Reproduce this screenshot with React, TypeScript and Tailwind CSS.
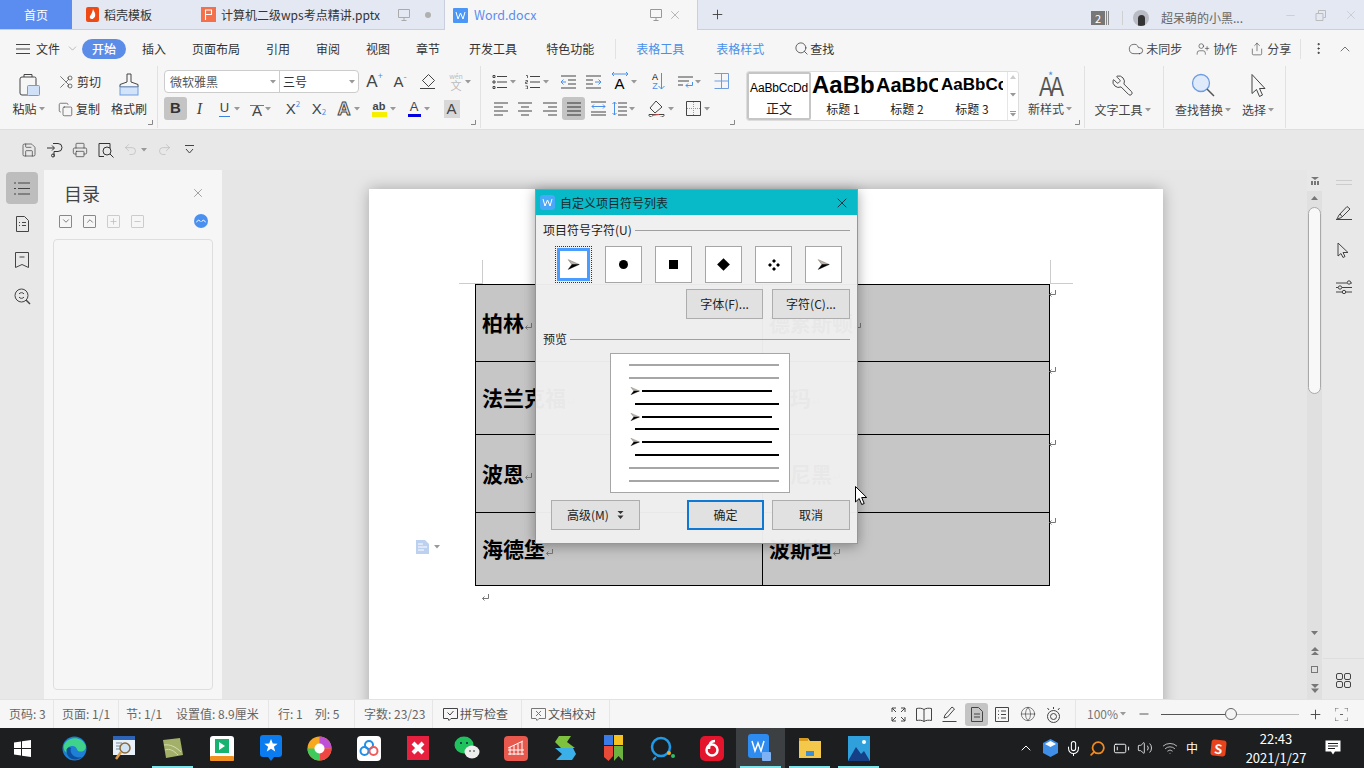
import React from 'react';
import { Plus, X, Minus, Search, ChevronDown, ChevronUp, Wrench, MoreVertical, Printer, Save, Undo2, Redo2, Cloud, UserPlus, Share, Copy, Scissors, Globe, Wifi, Volume2, Mic, BatteryLow } from 'lucide-react';

const G: React.FC<{ w: number; h: number; className?: string; children: React.ReactNode; sw?: number; stroke?: string }> = ({ w, h, className = '', children, sw = 1, stroke = '#444' }) => (
  <svg width={w} height={h} viewBox={`0 0 ${w} ${h}`} fill="none" stroke={stroke} strokeWidth={sw} className={`shrink-0 ${className}`}>
    {children}
  </svg>
);

const Caret = ({ className = '' }: { className?: string }) => (
  <svg width="6" height="4" viewBox="0 0 6 4" className={`shrink-0 ${className}`}><path d="M0 0h6L3 3.5z" fill="#999" /></svg>
);

const Enter = ({ className = '' }: { className?: string }) => (
  <svg width="9" height="9" viewBox="0 0 9 9" fill="none" stroke="#777" className={`shrink-0 ${className}`}>
    <path d="M7.5 1v4.5H1.5M3.5 3.5l-2 2 2 2" />
  </svg>
);

const LetterA = ({ className = '', size = 'text-[17px]' }: { className?: string; size?: string }) => (
  <span className={`[font-family:'Liberation_Sans',sans-serif] leading-none ${size} ${className}`}>A</span>
);

const Arrowhead = ({ s = 16 }: { s?: number }) => (
  <svg width={s} height={s} viewBox="0 0 16 16">
    <path d="M1.500 2L15 8H6z" fill="#b5b5b5" stroke="#8a7a66" strokeWidth="0.700" />
    <path d="M15 8L1.500 14 6 8z" fill="#000" stroke="#000" strokeWidth="0.500" />
  </svg>
);

const tabsBg = 'bg-[#e4e8f2]';

function TabBar() {
  return (
    <div className={`flex h-[30px] shrink-0 ${tabsBg} border-b border-[#c9cfdf] text-[12px] text-[#333]`}>
      <div className="flex w-[72px] items-center justify-center bg-[#5b8df0] text-white">首页</div>
      <div className="ml-px flex w-[115px] items-center bg-[#e4e8f2] pl-[13px]">
        <div className="flex h-[15px] w-[13px] shrink-0 items-center justify-center rounded-[2px] bg-[#ef4a16]">
          <svg width="7" height="11" viewBox="0 0 7 11"><path d="M4 0C5 3 7 4 6 7.500 5 10 2 11 1 9 0 7 3 6 4 0z" fill="#fff" /></svg>
        </div>
        <span className="ml-[5px]">稻壳模板</span>
      </div>
      <div className="ml-[2px] flex w-[253px] items-center bg-[#e4e8f2] pl-[11px]">
        <div className="flex h-[15px] w-[15px] shrink-0 items-center justify-center bg-[#f4704a]">
          <svg width="9" height="11" viewBox="0 0 9 11" fill="none" stroke="#fff" strokeWidth="1.100"><path d="M1.500 11V1H7.500V5.500H1.500" /></svg>
        </div>
        <span className="ml-[5px] whitespace-nowrap text-[12px]">计算机二级wps考点精讲.pptx</span>
        <G w={14} h={14} className="ml-[17px]" stroke="#aaa"><path d="M1.500 1.500h11v8h-11zM7 9.500v3M4.500 12.500h5" /></G>
        <div className="ml-[14px] h-[6px] w-[6px] rounded-full bg-[#b0b0b0]" />
      </div>
      <div className="-mb-px ml-px flex w-[254px] items-center border-x border-[#c9cfdf] bg-[#f6f6f6] pl-[8px]">
        <div className="flex h-[15px] w-[15px] shrink-0 items-center justify-center rounded-[1px] bg-[#4c97f5]">
          <svg width="11" height="9" viewBox="0 0 11 9" fill="none" stroke="#fff"><path d="M1 1l2 7 2.500-6 2.500 6 2-7" /></svg>
        </div>
        <span className="ml-[6px] text-[12.500px] text-[#5b8df0]">Word.docx</span>
        <G w={14} h={14} className="ml-[113px]" stroke="#999"><path d="M1.500 1.500h11v8h-11zM7 9.500v3M4.500 12.500h5" /></G>
        <X size={14} strokeWidth={1} className="ml-[5px] shrink-0 text-[#888]" />
      </div>
      <Plus size={15} strokeWidth={1.500} className="ml-[12px] self-center text-[#444]" />
      <div className="ml-[366px] flex items-center pt-[7px]">
        <div className="flex h-[14px] w-[14px] items-center justify-center bg-[#777] text-[11px] leading-none text-white">2</div>
        <div className="ml-px h-[14px] w-[3px] border-x border-[#888]" />
        <div className="ml-[13px] h-[14px] w-px bg-[#d0d0d0]" />
        <div className="ml-[10px] flex h-[16px] w-[16px] items-end justify-center overflow-hidden rounded-full bg-[#b9bcc4]">
          <div className="h-[11px] w-[7px] rounded-t-full bg-[#333]" />
        </div>
        <span className="ml-[12px] w-[82px] whitespace-nowrap text-[#666]">超呆萌的小黑...</span>
      </div>
      <div className="ml-[41px] flex items-center pt-[1px] text-[#bbb]">
        <Minus size={13} strokeWidth={1} />
        <G w={13} h={13} stroke="#bbb" className="ml-[17px]"><path d="M2 4.500h7v7H2zM4.500 4V1.500h7v7H9.500" /></G>
        <X size={14} strokeWidth={1} className="ml-[17px]" />
      </div>
    </div>
  );
}

function MenuRow() {
  return (
    <div className="flex h-[36px] shrink-0 items-center bg-[#f6f6f6] pl-[16px] pt-[1px] text-[12px] text-[#333]">
      <G w={14} h={10}><path d="M0 .5h14M0 5h14M0 9.500h14" /></G>
      <span className="ml-[6px]">文件</span>
      <ChevronDown size={13} strokeWidth={1} className="ml-[6px] text-[#888]" />
      <span className="ml-[3px] flex h-[20px] w-[44px] items-center justify-center rounded-full bg-[#5b8de8] font-medium text-white">开始</span>
      <span className="ml-[16px]">插入</span>
      <span className="ml-[26px]">页面布局</span>
      <span className="ml-[26px]">引用</span>
      <span className="ml-[26px]">审阅</span>
      <span className="ml-[26px]">视图</span>
      <span className="ml-[26px]">章节</span>
      <span className="ml-[29px]">开发工具</span>
      <span className="ml-[29px]">特色功能</span>
      <div className="ml-[21px] h-[20px] w-px bg-[#e2e2e2]" />
      <span className="ml-[20px] text-[#4a90e8]">表格工具</span>
      <span className="ml-[32px] text-[#4a90e8]">表格样式</span>
      <Search size={15} strokeWidth={1.300} className="ml-[30px] text-[#444]" />
      <span className="ml-px">查找</span>
      <Cloud size={16} strokeWidth={1} className="ml-[294px]" />
      <span className="ml-[2px] text-[#444]">未同步</span>
      <UserPlus size={14} strokeWidth={1} className="ml-[14px]" />
      <span className="ml-[3px] text-[#444]">协作</span>
      <Share size={14} strokeWidth={1} className="ml-[13px]" />
      <span className="ml-[3px] text-[#444]">分享</span>
      <div className="ml-[9px] h-[20px] w-px bg-[#e2e2e2]" />
      <MoreVertical size={15} strokeWidth={1.500} className="ml-[10px]" />
      <ChevronUp size={16} strokeWidth={1} className="ml-[11px]" />
    </div>
  );
}

const Corner = () => (
  <svg width="5" height="5" viewBox="0 0 5 5" className="absolute bottom-[4px] right-[4px]" fill="none" stroke="#888"><path d="M4.500 0v4.500H0" /></svg>
);

const Sep = () => <div className="h-[62px] w-px shrink-0 bg-[#e2e2e2]" />;

function ClipboardGroup() {
  return (
    <div className="relative flex w-[157px] shrink-0 text-[12px] text-[#333]">
      <div className="flex w-[56px] flex-col items-center pt-[7px] pl-[1px]">
        <G w={24} h={24}>
          <path d="M5 4h12.500a1.500 1.500 0 0 1 1.500 1.500V12M5 4A2 2 0 0 0 3 6v14a2 2 0 0 0 2 2h6" />
          <path d="M7 4V1.500h8V4" />
          <rect x="10.500" y="12.500" width="12" height="10" rx="1" fill="#cfe0f7" stroke="#6f9ee0" />
        </G>
        <div className="mt-[3px] flex items-center gap-[2px] text-[12px]">粘贴<Caret /></div>
      </div>
      <div className="flex w-[52px] flex-col pt-[6px] pl-[2px]">
        <div className="flex h-[20px] items-center gap-[3px]"><Scissors size={16} strokeWidth={1} className="-scale-x-100" />剪切</div>
        <div className="mt-[7px] flex h-[20px] items-center gap-[3px]"><Copy size={15} strokeWidth={1} />复制</div>
      </div>
      <div className="flex w-[44px] flex-col items-center pt-[7px] pr-[2px]">
        <G w={24} h={24}>
          <path d="M10 1h4v8l7 2.500V14H3v-2.500L10 9z" />
          <rect x="3" y="14" width="18" height="8" fill="#d3e3f9" stroke="#6f9ee0" />
        </G>
        <div className="mt-[3px] whitespace-nowrap">格式刷</div>
      </div>
      <Corner />
    </div>
  );
}

function FontGroup() {
  return (
    <div className="relative flex w-[322px] shrink-0 flex-col pl-[6px] pt-[4px] text-[#444]">
      <div className="flex h-[23px] items-center">
        <div className="flex h-[23px] w-[195px] rounded-[4px] border border-[#ccc] bg-white text-[12px] text-[#555]">
          <div className="flex w-[115px] items-center justify-between border-r border-[#ccc] pl-[5px] pr-[3px]">微软雅黑<Caret /></div>
          <div className="flex flex-1 items-center justify-between pl-[3px] pr-[3px] text-[#333]">三号<Caret /></div>
        </div>
        <div className="flex w-[27px] justify-center pl-[4px]"><LetterA /><span className="-mt-[2px] text-[9px] leading-none text-[#4a90e8]">+</span></div>
        <div className="flex w-[26px] justify-center pl-[2px]"><LetterA size="text-[15px]" /><span className="-mt-[2px] text-[9px] leading-none text-[#4a90e8]">-</span></div>
        <div className="flex w-[30px] justify-center">
          <G w={17} h={17}><path d="M9.500 1.500l6 6-6 6-6-6zM1 15.500h15" /><path d="M3.500 7.500l6 6" /></G>
        </div>
        <div className="ml-[3px] flex w-[30px] items-center justify-center gap-[2px]">
          <div className="flex flex-col items-center leading-none text-[#bbb]"><span className="text-[7px] leading-[8px]">wén</span><span className="text-[11px] leading-[11px]">文</span></div>
          <Caret />
        </div>
      </div>
      <div className="mt-[4px] flex h-[23px] items-center">
        <div className="flex h-[23px] w-[23px] items-center justify-center rounded-[3px] bg-[#c4c4c4] [font-family:'Liberation_Sans',sans-serif] text-[15px] font-bold text-[#333]">B</div>
        <div className="flex w-[25px] justify-center [font-family:'Liberation_Serif',serif] text-[16px] italic text-[#444]">I</div>
        <div className="flex w-[34px] items-center justify-center gap-[4px] pl-[1px]"><div className="flex h-[16px] flex-col items-center border-b border-[#3b82e0] px-[1px] [font-family:'Liberation_Sans',sans-serif] text-[13px] font-light leading-[14px]">U</div><Caret /></div>
        <div className="flex w-[34px] items-center justify-center gap-[3px] pr-[3px]">
          <div className="relative"><LetterA size="text-[15px]" /><div className="absolute left-[-2px] right-[-2px] top-[8px] h-px bg-[#d05050]" /></div><Caret />
        </div>
        <div className="flex w-[26px] justify-center"><span className="[font-family:'Liberation_Sans',sans-serif] text-[15px] leading-none">X</span><span className="-mt-[1px] text-[8px] leading-none text-[#4a90e8]">2</span></div>
        <div className="flex w-[26px] items-end justify-center"><span className="[font-family:'Liberation_Sans',sans-serif] text-[15px] leading-none">X</span><span className="text-[8px] leading-none text-[#4a90e8]">2</span></div>
        <div className="flex w-[33px] items-center justify-center gap-[3px]"><LetterA size="text-[18px] font-bold text-[#eee] [-webkit-text-stroke:1px_#444]" /><Caret /></div>
        <div className="flex w-[37px] items-center justify-center gap-[3px]">
          <div className="flex flex-col items-center"><span className="[font-family:'Liberation_Sans',sans-serif] text-[11px] font-bold leading-[11px]">ab</span><div className="h-[5px] w-[15px] bg-[#f6f000]" /></div><Caret />
        </div>
        <div className="flex w-[33px] items-center justify-center gap-[3px]">
          <div className="flex flex-col items-center"><LetterA size="text-[13px]" /><div className="mt-px h-[3px] w-[13px] bg-[#0000e0]" /></div><Caret />
        </div>
        <div className="flex w-[33px] justify-center"><div className="flex h-[18px] w-[16px] items-center justify-center bg-[#d8d8d8]"><LetterA size="text-[15px]" /></div></div>
      </div>
      <Corner />
    </div>
  );
}

const ListIcon = ({ num = false }: { num?: boolean }) => (
  <G w={15} h={14}>
    <path d="M5 1.500h10M5 7h10M5 12.500h10" />
    {num ? <path d="M1 .5h1.500V3M.5 5.500h2v1.500h-2V8.500h2M.5 11h2v3h-2" strokeWidth="0.8" /> : <path d="M1 .5h2v2H1zM1 6h2v2H1zM1 11.500h2v2H1z" />}
  </G>
);

const Align = ({ kind }: { kind: 'l' | 'c' | 'r' | 'j' }) => {
  const p = { l: 'M1 2h14M1 6h9M1 10h14M1 14h9', c: 'M1 2h14M4 6h8M1 10h14M4 14h8', r: 'M1 2h14M6 6h9M1 10h14M6 14h9', j: 'M1 2h14M1 6h14M1 10h14M1 14h14' }[kind];
  return <G w={16} h={16} stroke={kind === 'j' ? '#333' : '#444'}><path d={p} /></G>;
};

function ParaGroup() {
  return (
    <div className="relative flex w-[258px] shrink-0 flex-col pl-[8px] pt-[4px]">
      <div className="flex h-[23px] items-center">
        <div className="flex w-[32px] items-center gap-[3px] pl-[3px]"><ListIcon /><Caret /></div>
        <div className="flex w-[35px] items-center gap-[3px] pl-[4px]"><ListIcon num /><Caret /></div>
        <div className="flex w-[25px] justify-center"><G w={15} h={14}><path d="M0 1h15M0 13h15M7 5h8M7 9h8" /><path d="M5 7H0M2.500 4.500L0 7l2.500 2.500" stroke="#4a90e8" /></G></div>
        <div className="flex w-[25px] justify-center"><G w={15} h={14}><path d="M0 1h15M0 13h15M0 5h7M0 9h7" /><path d="M9 7h6M12.500 4.500L15 7l-2.500 2.500" stroke="#4a90e8" /></G></div>
        <div className="flex w-[36px] items-center justify-center gap-[3px]">
          <div className="flex flex-col items-center"><G w={16} h={4} stroke="#4a90e8"><path d="M0 2h16M2 0L0 2l2 2M14 0l2 2-2 2" /></G><LetterA size="text-[15px]" /></div><Caret />
        </div>
        <div className="flex w-[31px] justify-center pl-[2px]">
          <div className="flex items-center"><div className="flex flex-col items-center [font-family:'Liberation_Sans',sans-serif] text-[9px] leading-[9px]"><span>A</span><span className="text-[#4a90e8]">Z</span></div><G w={7} h={17} stroke="#4a90e8"><path d="M3.500 0v16M.5 13l3 3 3-3" /></G></div>
        </div>
        <div className="flex w-[32px] items-center justify-center gap-[2px]">
          <G w={15} h={14}><path d="M0 2h15M0 6h11M0 10h5" /><path d="M8 10.500h6.500V7M8 10.500l2-2M8 10.500l2 2" stroke="#4a90e8" /></G><Caret />
        </div>
        <div className="flex w-[32px] justify-center"><G w={15} h={17} stroke="#6f9ee0"><path d="M.5.5h14v15H.5M.5.5M7.500.5v15M7.500 8h7" /><path d="M.5 8h7" stroke="#6f9ee0" /></G></div>
      </div>
      <div className="mt-[4px] flex h-[23px] items-center">
        <div className="flex w-[23px] justify-center"><Align kind="l" /></div>
        <div className="flex w-[25px] justify-center"><Align kind="c" /></div>
        <div className="flex w-[25px] justify-center"><Align kind="r" /></div>
        <div className="flex h-[23px] w-[23px] items-center justify-center rounded-[3px] bg-[#c4c4c4]"><Align kind="j" /></div>
        <div className="flex w-[26px] justify-center"><G w={15} h={15}><path d="M0 1h15M0 14h15M0 11h15" /><path d="M1 5.500h13M3 3.500l-2 2 2 2M12 3.500l2 2-2 2" stroke="#4a90e8" /></G></div>
        <div className="flex w-[23px] items-center justify-center gap-[2px] pl-[2px]"><G w={15} h={15}><path d="M6 2h9M6 6h9M6 10h9M6 14h9" /><path d="M2.500 1v13M.5 3l2-2 2 2M.5 12l2 2 2-2" stroke="#4a90e8" /></G><Caret /></div>
        <div className="ml-[8px] flex w-[35px] items-center justify-center gap-[3px] pl-[3px]">
          <G w={17} h={17}><path d="M8 1L2 8l5 5 7-6zM1 15.500a7 2 0 0 0 15 0v-1H1z" /><path d="M4 15.500l7-1" stroke="#e05050" /></G><Caret />
        </div>
        <div className="flex w-[38px] items-center justify-center gap-[3px] pl-[4px]"><G w={15} h={15}><path d="M.5.5h14v14H.5z" /><path d="M7.500 1v13M1 7.500h13" stroke="#999" strokeDasharray="1 1" /></G><Caret /></div>
      </div>
      <Corner />
    </div>
  );
}

const StyleSample = ({ cls, width, text, label, labelCls = 'mt-[2px] text-[12px]' }: { cls: string; width: string; text: string; label: string; labelCls?: string }) => (
  <div className={`flex flex-col items-center overflow-hidden ${width}`}>
    <div className={`flex h-[28px] w-full items-center justify-center overflow-hidden whitespace-nowrap [font-family:'Liberation_Sans',sans-serif] text-black ${cls}`}>
      <span className="block">{text}</span>
    </div>
    <span className={`leading-[16px] text-[#222] ${labelCls}`}>{label}</span>
  </div>
);

function StylesGroup() {
  return (
    <div className="relative flex w-[345px] shrink-0 pl-[7px] pt-[5px]">
      <div className="flex h-[50px] w-[273px] rounded-[3px] border border-[#ddd] bg-white">
        <div className="rounded-[2px] border-2 border-[#c6c6c6]">
          <StyleSample cls="text-[12px] tracking-[-0.2px]" width="w-[60px]" text="AaBbCcDd" label="正文" labelCls="-mt-[2px] text-[13px]" />
        </div>
        <div className="-mt-px flex">
          <div className="flex w-[65px] overflow-hidden pl-[1px]"><StyleSample cls="!justify-start text-[24px] font-bold" width="w-[62px]" text="AaBb" label="标题 1" /></div>
          <div className="flex w-[65px] overflow-hidden"><StyleSample cls="!justify-start text-[20px] font-bold" width="w-[62px]" text="AaBbC" label="标题 2" /></div>
          <div className="flex w-[64px] overflow-hidden"><StyleSample cls="!justify-start text-[17px] font-bold" width="w-[62px]" text="AaBbCc" label="标题 3" /></div>
        </div>
        <div className="ml-auto flex w-[11px] flex-col items-center justify-between border-l border-[#e6e6e6] py-[3px]">
          <svg width="6" height="4" viewBox="0 0 6 4"><path d="M0 4h6L3 0z" fill="#ccc" /></svg>
          <Caret />
          <div className="flex flex-col items-center gap-px"><div className="h-px w-[6px] bg-[#999]" /><Caret /></div>
        </div>
      </div>
      <div className="ml-[1px] flex w-[60px] flex-col items-center">
        <div className="flex h-[27px] flex-col items-center leading-none">
          <span className="h-[9px] pl-[1px] text-[11px] leading-[9px] text-[#4a90e8]">*</span>
          <span className="origin-bottom scale-y-[1.3] [font-family:'Liberation_Sans',sans-serif] text-[21px] leading-[19px] tracking-[-3px] text-[#555]">AA</span>
        </div>
        <div className="mt-[2px] flex items-center gap-[2px] whitespace-nowrap text-[12px] text-[#444]">新样式<Caret /></div>
      </div>
      <Corner />
    </div>
  );
}

function ToolButton({ icon, label, cls }: { icon: React.ReactNode; label: string; cls: string }) {
  return (
    <div className={`flex flex-col items-center pt-[5px] ${cls}`}>
      <div className="flex h-[28px] items-center">{icon}</div>
      <div className="mt-[2px] flex items-center gap-[2px] whitespace-nowrap text-[12px] text-[#444]">{label}<Caret /></div>
    </div>
  );
}

function Ribbon() {
  return (
    <div className="flex h-[64px] shrink-0 border-b border-[#dedede] bg-[#f6f6f6]">
      <ClipboardGroup />
      <Sep />
      <FontGroup />
      <Sep />
      <ParaGroup />
      <StylesGroup />
      <Sep />
      <ToolButton cls="w-[78px] pr-[3px]" label="文字工具" icon={<Wrench size={23} strokeWidth={1} className="-scale-x-100 text-[#444]" />} />
      <Sep />
      <div className="flex w-[121px] shrink-0">
        <ToolButton cls="w-[78px]" label="查找替换" icon={
          <G w={25} h={25} stroke="#555"><circle cx="10" cy="10" r="8.500" fill="#dfeafa" stroke="#6f9ee0" strokeWidth="1.300" /><path d="M16 16l7 7" strokeWidth="1.500" /></G>
        } />
        <ToolButton cls="w-[32px]" label="选择" icon={
          <G w={18} h={25} stroke="#444"><path d="M3 1.500v19l4.500-4 3 7 3-1.500-3-6.500H16z" /></G>
        } />
      </div>
      <Sep />
    </div>
  );
}

function QuickBar() {
  return (
    <div className="flex h-[40px] shrink-0 items-center bg-[#e8e8e8] pb-[1px] pl-[21px]">
      <Save size={16} strokeWidth={1} className="text-[#333]" />
      <G w={16} h={16} className="ml-[10px]" stroke="#333"><path d="M0 6h7M5 3.500L7.500 6 5 8.500M6 1.500h5a4 4 0 0 1 0 8H7v5" /><circle cx="6" cy="13.500" r="1.500" /></G>
      <Printer size={16} strokeWidth={1} className="ml-[9px] text-[#333]" />
      <G w={16} h={16} className="ml-[10px]" stroke="#333"><path d="M6 14.500H1v-13h11V6" /><circle cx="9" cy="9" r="4" /><path d="M12 12l3.500 3.500" /></G>
      <Undo2 size={15} strokeWidth={1} className="ml-[9px] text-[#b5b5b5]" />
      <Caret className="ml-[3px]" />
      <Redo2 size={15} strokeWidth={1} className="ml-[10px] text-[#b5b5b5]" />
      <G w={11} h={9} className="ml-[12px]"><path d="M1 .5h9M2 4l3.500 4L9 4" /></G>
    </div>
  );
}

function LeftStrip() {
  return (
    <div className="flex w-[44px] shrink-0 flex-col items-center bg-[#e8e8e8] pt-[2px]">
      <div className="flex h-[32px] w-[32px] items-center justify-center rounded-[4px] bg-[#bdbdbd]">
        <G w={16} h={13} stroke="#444"><path d="M4 1h12M4 6.500h12M4 12h12M0 1h2M0 6.500h2M0 12h2" /></G>
      </div>
      <div className="mt-[12px]"><G w={14} h={16}><path d="M1.500 .5h8l4 4v11h-12z" /><path d="M4 6.500h1M7 6.500h4M4 9.500h1M7 9.500h4" /></G></div>
      <div className="mt-[20px]"><G w={14} h={16}><path d="M.5.5h13v15L7 12.500.5 15.500z" /><path d="M4.500 5h5" /></G></div>
      <div className="mt-[20px]"><G w={17} h={17}><circle cx="7.500" cy="7.500" r="6.500" /><path d="M12 12l4 4" strokeWidth="1.500" /><path d="M5 6a3 3 0 0 1 5 0M10 9a3 3 0 0 1-5 0" /></G></div>
    </div>
  );
}

const TocBtn = ({ children, muted }: { children: React.ReactNode; muted?: boolean }) => (
  <div className={`flex h-[13px] w-[13px] items-center justify-center rounded-[1px] border ${muted ? 'border-[#ccc] text-[#bbb]' : 'border-[#888] text-[#666]'}`}>{children}</div>
);

function TocPanel() {
  return (
    <div className="flex w-[178px] shrink-0 flex-col bg-[#f6f6f6] pb-[9px] pl-[9px] pr-[9px]">
      <div className="mt-[12px] flex h-[22px] items-center pl-[11px] text-[18px] leading-none text-[#444]">
        目录
        <X size={14} strokeWidth={1} className="ml-[91px] text-[#666]" />
      </div>
      <div className="mt-[10px] flex items-center pl-[6px]">
        <TocBtn><ChevronDown size={10} /></TocBtn>
        <div className="ml-[11px]"><TocBtn><ChevronUp size={10} /></TocBtn></div>
        <div className="ml-[11px]"><TocBtn muted><Plus size={9} /></TocBtn></div>
        <div className="ml-[11px]"><TocBtn muted><Minus size={9} /></TocBtn></div>
        <div className="ml-[50px] flex h-[14px] w-[14px] items-center justify-center rounded-full bg-[#4a90f0]">
          <G w={10} h={4} stroke="#fff"><path d="M0 3.500l2.500-2.500 2 1.500M5.500 2.500l2-1.500L10 3.500" /></G>
        </div>
      </div>
      <div className="mt-[11px] flex-1 rounded-[4px] border border-[#dedede] bg-[#f6f6f6]" />
    </div>
  );
}

const cells = [
  ['柏林', '德累斯顿', 'h-[77px]'],
  ['法兰克福', '科玛', 'h-[73px]'],
  ['波恩', '慕尼黑', 'h-[78px]'],
  ['海德堡', '波斯坦', 'h-[73px]'],
];

function DocPage() {
  return (
    <div className="relative ml-[147px] mt-[19px] h-[600px] w-[794px] bg-white pl-[106px] pt-[95px] shadow-[0_0_14px_rgba(0,0,0,0.28)]">
      <div className="absolute left-[113px] top-[71px] h-[24px] w-px bg-[#ccc]" />
      <div className="absolute left-[90px] top-[94px] h-px w-[23px] bg-[#ccc]" />
      <div className="absolute left-[681px] top-[71px] h-[24px] w-px bg-[#ccc]" />
      <div className="absolute left-[681px] top-[94px] h-px w-[23px] bg-[#ccc]" />
      <div className="w-[575px] border-t border-l border-black bg-[#c6c6c6]">
        {cells.map(([a, b, h]) => (
          <div key={a} className={`relative flex ${h}`}>
            <div className="flex w-[287px] items-center border-r border-b border-black pb-[1px] pl-[6px] text-[21px] font-bold leading-none text-black">
              {a}<Enter className="mt-[7px]" />
            </div>
            <div className="flex w-[287px] items-center border-r border-b border-black pb-[1px] pl-[6px] text-[21px] font-bold leading-none text-black">
              {b}<Enter className="mt-[7px]" />
            </div>
            <Enter className="absolute left-[572px] top-[4px]" />
          </div>
        ))}
      </div>
      <Enter className="ml-[6px] mt-[7px]" />
      <div className="absolute left-[47px] top-[351px] flex items-center gap-[5px]">
        <G w={13} h={14} stroke="#fff"><path d="M0 0h9l4 4v10H0z" fill="#bcd0f0" stroke="none" /><path d="M2 4h5M2 7h9M2 10h6" /></G>
        <Caret />
      </div>
    </div>
  );
}

function ScrollBar() {
  const ar = 'fill-[#777]';
  return (
    <div className="flex w-[57px] shrink-0 bg-[#e8e8e8]">
      <div className="flex w-[15px] flex-col items-center bg-[#e0e0e0]">
        <div className="flex h-[21px] w-full items-center justify-center bg-[#e8e8e8]">
          <svg width="8" height="8" viewBox="0 0 8 8"><path d="M0 0h8L4 3z" className={ar} /><path d="M0 4h2v4H0zM3 4h2v4H3zM6 4h2v4H6z" className={ar} /></svg>
        </div>
        <svg width="7" height="4" viewBox="0 0 7 4" className="mt-[5px]"><path d="M0 4h7L3.500 0z" className={ar} /></svg>
        <div className="mt-[7px] h-[187px] w-[13px] rounded-[7px] border border-[#a9a9a9] bg-[#f8f8f8]" />
        <svg width="7" height="4" viewBox="0 0 7 4" className="mt-[237px]"><path d="M0 0h7L3.500 4z" className={ar} /></svg>
        <svg width="8" height="9" viewBox="0 0 8 9" className="mt-[12px]"><path d="M0 4h8L4 0zM0 8h8L4 4.500z" className={ar} /></svg>
        <div className="mt-[10px] h-[7px] w-[7px] border border-[#777]" />
        <svg width="8" height="9" viewBox="0 0 8 9" className="mt-[11px]"><path d="M0 0h8L4 4zM0 4.500h8L4 9z" className={ar} /></svg>
      </div>
      <div className="flex flex-1 flex-col items-center pl-[1px]">
        <div className="mt-[10px] flex w-[16px] flex-col gap-[3px]"><div className="h-px bg-[#ccc]" /><div className="h-px bg-[#ccc]" /></div>
        <G w={17} h={15} className="mt-[20px]"><path d="M1 14.500h16M2 14l2-4 8-8.500 3 2.500-8.500 8.500-4 1.500M5 9l2.500 3" /></G>
        <G w={13} h={17} className="mt-[22px]"><path d="M1 1v13l3-2.500 2 4 2-1-2-4h5z" /></G>
        <G w={16} h={14} className="mt-[21px]"><path d="M0 3h11M14.500 3H16M0 7.500h2M6 7.500h10M0 12h6M9.500 12H16" /><circle cx="13" cy="2.500" r="1.700" /><circle cx="4" cy="7.500" r="1.700" /><circle cx="8" cy="12" r="1.700" /></G>
        <div className="mt-auto w-full border-t border-[#dedede] pb-[11px] pt-[14px]">
          <div className="flex justify-center"><G w={15} h={15}><rect x=".5" y=".5" width="6" height="6" rx="1.500" /><rect x="8.500" y=".5" width="6" height="6" rx="1.500" /><rect x=".5" y="8.500" width="6" height="6" rx="1.500" /><rect x="8.500" y="8.500" width="6" height="6" rx="1.500" /></G></div>
        </div>
      </div>
    </div>
  );
}

const StatusCell = ({ children, cls }: { children: React.ReactNode; cls: string }) => (
  <div className={`flex h-full items-center border-r border-[#e6e6e6] whitespace-nowrap ${cls}`}>{children}</div>
);

function StatusBar() {
  return (
    <div className="flex h-[29px] shrink-0 items-center border-t border-[#e2e2e2] bg-[#f6f6f6] text-[12px] text-[#666]">
      <StatusCell cls="w-[54px] pl-[9px]">页码: 3</StatusCell>
      <StatusCell cls="w-[65px] pl-[8px]">页面: 1/1</StatusCell>
      <StatusCell cls="w-[150px] pl-[7px]">节: 1/1<span className="ml-[14px]">设置值: 8.9厘米</span></StatusCell>
      <StatusCell cls="w-[86px] pl-[9px]">行: 1<span className="ml-[12px]">列: 5</span></StatusCell>
      <StatusCell cls="w-[78px] pl-[9px]">字数: 23/23</StatusCell>
      <StatusCell cls="w-[89px] pl-[10px]">
        <G w={15} h={13}><path d="M.5.5h14v10H8L6 12.500 5 10.500H.5z" /><path d="M4.500 4.500l2.500 2.500 3.500-4" /></G>
        <span className="ml-[2px] text-[#555]">拼写检查</span>
      </StatusCell>
      <StatusCell cls="w-[88px] pl-[9px]">
        <G w={15} h={13} stroke="#777"><path d="M.5.5h14v10H8L6 12.500 5 10.500H.5z" /><path d="M5 3l5 5M10 3L5 8" /></G>
        <span className="ml-[2px] text-[#555]">文档校对</span>
      </StatusCell>
      <div className="ml-[281px] flex items-center">
        <G w={15} h={15}><path d="M1 5V1h4M10 1h4v4M14 10v4h-4M5 14H1v-4M1 1l4 4M14 1l-4 4M14 14l-4-4M1 14l4-4" /></G>
        <G w={16} h={15} className="ml-[10px]"><path d="M8 2.500C6 1 3 1 .5 1.500v12C3 13 6 13 8 14.500 10 13 13 13 15.500 13.500v-12C13 1 10 1 8 2.500zM8 2.500v12" /></G>
        <G w={15} h={16} className="ml-[10px]"><path d="M.5 15.500h14M2 12l1-3 7-8 2.500 2-7 8z" /></G>
        <div className="ml-[8px] flex h-[23px] w-[23px] items-center justify-center rounded-[3px] bg-[#c4c4c4]">
          <G w={12} h={15}><path d="M.5.5h7l4 4v10H.5zM3 7h6M3 10h6" /></G>
        </div>
        <G w={14} h={15} className="ml-[7px]"><path d="M.5.5h13v14H.5zM3 4h1M6 4h5M3 7.500h1M6 7.500h5M3 11h1M6 11h5" /></G>
        <Globe size={16} strokeWidth={1} className="ml-[11px] text-[#444]" />
        <G w={17} h={17} className="ml-[9px]"><circle cx="8.500" cy="10.500" r="6" /><circle cx="8.500" cy="10.500" r="3" /><path d="M4 4L2.500 2M8.500 3V1M13 4l1.500-2" /></G>
      </div>
      <div className="ml-[13px] h-full w-px bg-[#e6e6e6]" />
      <span className="ml-[11px] text-[#777]">100%</span>
      <Caret className="ml-[2px]" />
      <Minus size={14} strokeWidth={1.500} className="ml-[11px] text-[#444]" />
      <div className="ml-[10px] flex h-[12px] w-[138px] items-center">
        <div className="h-px w-[64px] bg-[#555]" />
        <div className="h-[12px] w-[12px] rounded-full border border-[#666] bg-[#f4f4f4]" />
        <div className="h-px flex-1 bg-[#bbb]" />
      </div>
      <Plus size={15} strokeWidth={1.500} className="ml-[9px] text-[#444]" />
      <G w={13} h={13} className="ml-[12px]" stroke="#666"><path d="M0 3.500V0h3.500M9.500 0H13v3.500M13 9.500V13H9.500M3.500 13H0V9.500M5 6.500h3" /></G>
    </div>
  );
}

const Tk = ({ children, active, open }: { children: React.ReactNode; active?: boolean; open?: boolean }) => (
  <div className={`relative flex h-[40px] w-[49px] shrink-0 items-center justify-center ${active ? 'bg-[#3c4043]' : ''}`}>
    {children}
    {open && <div className="absolute bottom-0 left-[4px] right-[4px] h-[2px] bg-[#7fe3ea]" />}
  </div>
);

function Taskbar() {
  return (
    <div className="flex h-[40px] shrink-0 items-center bg-[#1c1e20] text-white">
      <div className="flex w-[50px] justify-center pr-[6px]">
        <svg width="17" height="17" viewBox="0 0 17 17"><path d="M0 2.500l7-1v6.500H0zM8 1.300L17 0v8H8zM0 9h7v6.500l-7-1zM8 9h9v8l-9-1.300z" fill="#fff" /></svg>
      </div>
      <Tk><svg width="25" height="25" viewBox="0 0 25 25"><circle cx="12.500" cy="12.500" r="12" fill="#1f7fd6" /><path d="M2 9C5 1 19-1 23.500 9c1.500 5-3 7-6 6.500-3-.5-2-4-5-5C8 9 4 12 5 17 2 15 1 12 2 9z" fill="#3fd28a" /><path d="M9 12c-2 6 4 11 11 9-6 5-16 2-15.500-7 0-2 3-4 4.500-2z" fill="#0d4f9f" /></svg></Tk>
      <Tk><svg width="24" height="26" viewBox="0 0 24 26"><rect x="1" y="1" width="22" height="19" fill="#e8f0fa" /><rect x="1" y="1" width="22" height="4" fill="#2e64b8" /><path d="M4 8h6M4 11h5M4 14h5" stroke="#789" /><circle cx="13" cy="13" r="5" fill="#cfe4f7" stroke="#8a6a3a" strokeWidth="1.500" /><path d="M9 17l-5 7" stroke="#d79a4a" strokeWidth="2.500" /></svg></Tk>
      <Tk open><svg width="22" height="22" viewBox="0 0 22 22"><path d="M1 3l17-2 3 17-17 3z" fill="#a3b06a" /><path d="M2 8c6-1 12 2 17 7M3 13c5-2 9 1 13 5" stroke="#d5dcae" fill="none" /></svg></Tk>
      <Tk><svg width="24" height="25" viewBox="0 0 24 25"><rect width="24" height="25" rx="3" fill="#fff" /><path d="M5 3h14v14H5z" fill="#15b36f" /><path d="M9 6v8l6-4z" fill="#fff" /><rect y="20" width="24" height="5" rx="1" fill="#f09020" /></svg></Tk>
      <Tk><svg width="22" height="26" viewBox="0 0 22 26"><path d="M3 0h16a3 3 0 0 1 3 3v16a3 3 0 0 1-3 3h-5l-3 4-3-4H3a3 3 0 0 1-3-3V3a3 3 0 0 1 3-3z" fill="#0b7bf0" /><path d="M11 4l1.800 4.500 4.800.2-3.700 3 1.300 4.700-4.200-2.700-4.200 2.700 1.300-4.700-3.700-3 4.800-.2z" fill="#fff" /></svg></Tk>
      <Tk><svg width="25" height="25" viewBox="0 0 25 25"><circle cx="12.500" cy="12.500" r="12" fill="#f7a81f" /><path d="M12.500 .5a12 12 0 0 1 12 12H12.500z" fill="#c04fd8" /><path d="M24.500 12.500a12 12 0 0 1-12 12v-12z" fill="#ef4545" /><path d="M12.500 24.500a12 12 0 0 1-12-12h12z" fill="#3ecb5c" /><circle cx="12.500" cy="12.500" r="5" fill="#fff" /></svg></Tk>
      <Tk><svg width="24" height="25" viewBox="0 0 24 25"><rect width="24" height="25" rx="4" fill="#fff" /><circle cx="12" cy="9" r="4" fill="none" stroke="#1f8fe8" strokeWidth="2" /><circle cx="7.500" cy="15" r="4" fill="none" stroke="#1f8fe8" strokeWidth="2" /><circle cx="16.500" cy="15" r="4" fill="none" stroke="#ef5b5b" strokeWidth="2" /></svg></Tk>
      <Tk><svg width="22" height="24" viewBox="0 0 22 24"><rect width="22" height="24" fill="#e8203f" /><path d="M6 7l10 10M16 7L6 17" stroke="#fff" strokeWidth="4" /></svg></Tk>
      <Tk><svg width="26" height="24" viewBox="0 0 26 24"><ellipse cx="10" cy="9" rx="9.500" ry="8.500" fill="#1fc25c" /><ellipse cx="18" cy="16" rx="7.500" ry="6.500" fill="#eee" /><circle cx="7" cy="7" r="1" fill="#124" /><circle cx="13" cy="7" r="1" fill="#124" /><circle cx="16" cy="15" r="1" fill="#777" /><circle cx="20" cy="15" r="1" fill="#777" /></svg></Tk>
      <Tk><svg width="24" height="25" viewBox="0 0 24 25"><rect width="24" height="25" rx="4" fill="#e8584d" /><path d="M4 12l15-7M6 11v8M10 9v10M14 8v11M18 6v13M4 14h16M4 18h16" stroke="#fff" /></svg></Tk>
      <Tk><svg width="24" height="25" viewBox="0 0 24 25"><path d="M6 0h12l-4 6 8 6H8L2 6z" fill="#7ec13f" /><path d="M2 12h18l3 6-4 6H3l6-6z" fill="#3bb0e8" /></svg></Tk>
      <Tk><svg width="20" height="26" viewBox="0 0 20 26"><rect x="0" y="0" width="9" height="10" fill="#3b7be8" /><rect x="10" y="0" width="9" height="10" fill="#f6c21f" /><path d="M0 11h9v10l-4.500 5L0 22z" fill="#e84a3a" /><path d="M10 11h9v15l-4.500-5-4.500 5z" fill="#6db33f" /></svg></Tk>
      <Tk><svg width="26" height="25" viewBox="0 0 26 25" fill="none"><circle cx="11" cy="11" r="9" stroke="#1f9be8" strokeWidth="2.500" /><path d="M6 21l-3 3" stroke="#1f9be8" strokeWidth="2" /><circle cx="19" cy="17" r="2" fill="#f6a81f" /><circle cx="23" cy="20" r="2" fill="#2fc06a" /></svg></Tk>
      <Tk><svg width="24" height="25" viewBox="0 0 24 25"><rect width="24" height="25" rx="5" fill="#e3142c" /><circle cx="12" cy="14" r="5.500" fill="none" stroke="#fff" strokeWidth="2.500" /><path d="M9 13c0-6 2-8 6-8" fill="none" stroke="#fff" strokeWidth="2.500" /></svg></Tk>
      <Tk active open><svg width="25" height="28" viewBox="0 0 25 28"><rect width="21" height="24" rx="3" fill="#2e8bf0" /><path d="M4 7l3 10 3-8 3 8 3-10" fill="none" stroke="#fff" strokeWidth="1.500" /><rect x="14" y="18" width="9" height="9" rx="1" fill="#7fb2f5" /></svg></Tk>
      <Tk open><svg width="22" height="22" viewBox="0 0 22 22"><path d="M0 1h9l2 3h11v17H0z" fill="#f4c84a" /><rect x="0" y="1" width="9" height="3" fill="#d99a20" /><rect x="7" y="14" width="8" height="5" fill="#3b8fd8" /></svg></Tk>
      <Tk open><svg width="22" height="25" viewBox="0 0 22 25"><rect width="22" height="25" fill="#2fa0dc" /><path d="M0 25l8-14 5 7 3-3 6 10z" fill="#153f87" /><circle cx="16" cy="6" r="2" fill="#fff" /></svg></Tk>
      <div className="ml-[135px] flex items-center">
        <ChevronUp size={16} strokeWidth={1.500} />
        <svg width="15" height="18" viewBox="0 0 15 18" className="ml-[9px]"><path d="M7.500 0L15 4v10l-7.500 4L0 14V4z" fill="#3f8fe8" /><path d="M7.500 2L13 5l-5.500 3L2 5z" fill="#fff" /></svg>
        <Mic size={17} strokeWidth={1.500} className="ml-[7px]" />
        <Search size={17} strokeWidth={2.500} className="ml-[7px] -scale-x-100 text-[#f08a1f]" />
        <BatteryLow size={17} strokeWidth={1.300} className="ml-[7px]" />
        <Volume2 size={16} strokeWidth={1.200} className="ml-[7px]" />
        <Wifi size={16} strokeWidth={1.200} className="ml-[9px] text-[#ddd]" />
        <span className="ml-[8px] text-[12px] leading-none">中</span>
        <div className="ml-[13px] flex h-[16px] w-[15px] rotate-[6deg] items-center justify-center rounded-[3px] bg-[#e9431c] text-[13px] font-bold leading-none">S</div>
      </div>
      <div className="ml-[17px] flex w-[66px] flex-col items-center text-[13px] leading-[19px]">
        <span>22:43</span>
        <span className="whitespace-nowrap">2021/1/27</span>
      </div>
      <div className="ml-[16px]">
        <svg width="16" height="17" viewBox="0 0 16 17" fill="none"><path d="M.5.5h15v11H10l-2 3-2-3H.5z" fill="#fff" /><path d="M3 3.500h10M3 6h10M3 8.500h7" stroke="#1c1e20" /></svg>
      </div>
    </div>
  );
}

const BulletBtn = ({ children, selected }: { children: React.ReactNode; selected?: boolean }) => (
  selected ? (
    <div className="border border-dotted border-[#333] p-[1px]">
      <div className="flex h-[33px] w-[33px] items-center justify-center border-[3px] border-[#4a9dff] bg-white">{children}</div>
    </div>
  ) : (
    <div className="flex h-[37px] w-[37px] items-center justify-center border border-[#a6a6a6] bg-white">{children}</div>
  )
);

const DlgBtn = ({ children, w, primary, className = '' }: { children: React.ReactNode; w: string; primary?: boolean; className?: string }) => (
  <div className={`flex h-[30px] items-center justify-center bg-[#e1e1e1] text-[12px] text-[#222] ${primary ? 'border-2 border-[#0f78d4]' : 'border border-[#adadad]'} ${w} ${className}`}>{children}</div>
);

const Legend = ({ children }: { children: React.ReactNode }) => (
  <div className="flex h-[16px] items-center text-[12px] text-[#222]">
    {children}
    <div className="ml-[3px] h-px flex-1 bg-[#a0a0a0]" />
  </div>
);

const PreviewLine = ({ cls }: { cls: string }) => <div className={`h-[2px] ${cls}`} />;

function Preview() {
  const gray = 'ml-[18px] w-[150px] bg-[#a6a6a6]';
  return (
    <div className="ml-[67px] mt-[6px] flex h-[140px] w-[180px] flex-col justify-between border border-[#a6a6a6] bg-white py-[10px]">
      <PreviewLine cls={gray} />
      <PreviewLine cls={gray} />
      {[0, 1, 2].map((i) => (
        <React.Fragment key={i}>
          <div className="relative ml-[31px] h-[2px] w-[130px] bg-black">
            <div className="absolute -left-[12px] -top-[4px]"><Arrowhead s={10} /></div>
          </div>
          <PreviewLine cls="ml-[24px] w-[144px] bg-black" />
        </React.Fragment>
      ))}
      <PreviewLine cls={gray} />
      <PreviewLine cls={gray} />
    </div>
  );
}

function Dialog() {
  return (
    <div className="absolute left-[535px] top-[189px] flex h-[355px] w-[323px] flex-col border border-[#3fb9c6] bg-[#f0f0f0]/[0.97] shadow-[0_2px_12px_rgba(0,0,0,0.35)]">
      <div className="flex h-[25px] shrink-0 items-center bg-[#08b9c7] pl-[4px] text-[12px] text-[#1a2a2e]">
        <div className="flex h-[15px] w-[15px] items-center justify-center rounded-[3px] bg-[#4aa8f8]">
          <svg width="11" height="9" viewBox="0 0 11 9" fill="none" stroke="#fff"><path d="M1 1l2 7 2.500-6 2.500 6 2-7" /></svg>
        </div>
        <span className="ml-[5px]">自定义项目符号列表</span>
        <X size={16} strokeWidth={1.300} className="ml-auto mr-[7px] text-[#123]" />
      </div>
      <div className="flex flex-1 flex-col pl-[7px] pr-[7px] pt-[7px]">
        <Legend>项目符号字符(U)</Legend>
        <div className="mt-[8px] flex gap-[13px] pl-[12px]">
          <BulletBtn selected><Arrowhead s={13} /></BulletBtn>
          <BulletBtn><div className="h-[9px] w-[9px] rounded-full bg-black" /></BulletBtn>
          <BulletBtn><div className="h-[9px] w-[9px] bg-black" /></BulletBtn>
          <BulletBtn><div className="h-[9px] w-[9px] rotate-45 bg-black" /></BulletBtn>
          <BulletBtn>
            <svg width="12" height="12" viewBox="0 0 12 12"><path d="M6 0l2 2-2 2-2-2zM6 8l2 2-2 2-2-2zM0 6l2-2 2 2-2 2zM8 6l2-2 2 2-2 2z" fill="#000" /></svg>
          </BulletBtn>
          <BulletBtn><Arrowhead s={13} /></BulletBtn>
        </div>
        <div className="mt-[6px] flex justify-end gap-[9px]">
          <DlgBtn w="w-[77px]" className="bg-[#dcdcdc]">字体(F)...</DlgBtn>
          <DlgBtn w="w-[78px]">字符(C)...</DlgBtn>
        </div>
        <div className="mt-[12px]"><Legend>预览</Legend></div>
        <Preview />
        <div className="mt-[7px] flex pl-[8px]">
          <DlgBtn w="w-[89px]">高级(M)<svg width="7" height="9" viewBox="0 0 7 9" className="ml-[8px]"><path d="M.5 0h6L3.500 3zM.5 4.500h6L3.500 8z" fill="#333" /></svg></DlgBtn>
          <DlgBtn w="w-[77px]" primary className="ml-[47px]">确定</DlgBtn>
          <DlgBtn w="w-[78px]" className="ml-[8px]">取消</DlgBtn>
        </div>
      </div>
    </div>
  );
}

export default function App() {
  return (
    <div className="relative flex h-[768px] w-[1364px] flex-col overflow-hidden bg-[#e8e8e8] [font-family:'Noto_Sans_CJK_SC','Liberation_Sans',sans-serif]">
      <TabBar />
      <MenuRow />
      <Ribbon />
      <QuickBar />
      <div className="flex min-h-0 flex-1">
        <LeftStrip />
        <TocPanel />
        <div className="min-w-0 flex-1 overflow-hidden bg-[#e6e6e6]">
          <DocPage />
        </div>
        <ScrollBar />
      </div>
      <StatusBar />
      <Taskbar />
      <Dialog />
      <svg width="13" height="20" viewBox="0 0 13 20" className="absolute left-[855px] top-[486px]">
        <path d="M.5.5v15.500l3.700-3.500 2.500 6 2.500-1-2.500-6h5z" fill="#fff" stroke="#000" />
      </svg>
    </div>
  );
}
